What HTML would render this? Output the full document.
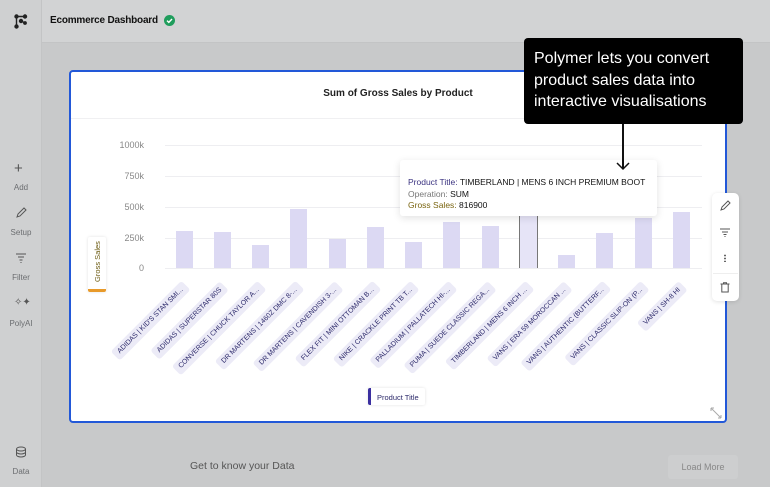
<!DOCTYPE html>
<html><head><meta charset="utf-8"><style>
*{margin:0;padding:0;box-sizing:border-box}
body{width:770px;height:487px;overflow:hidden;background:#c8c9ca;font-family:"Liberation Sans",sans-serif;position:relative}
.abs{position:absolute}
.side{left:0;top:0;width:42px;height:487px;background:#cfd0d1;border-right:1px solid #c3c4c5}
.top{left:42px;top:0;width:728px;height:43px;background:#d2d3d4;border-bottom:1px solid #c3c4c5}
.slabel{width:42px;text-align:center;font-size:8px;color:#6b6d70}
.card{left:69px;top:70px;width:658px;height:353px;background:#fff;border:2px solid #2258d8;border-radius:4px}
.yl{width:60px;text-align:right;font-size:9px;color:#888;left:84px}
.grid{left:165px;width:537px;height:1px;background:#eeeef1}
.bar{width:17px;background:#dcd9f3;bottom:219px}
.lab{font-size:7px;color:#2d2a6b;background:#ecebf7;padding:3px 5px;border-radius:3px;white-space:nowrap;transform-origin:100% 50%;transform:rotate(-45deg)}
.tb{left:712px;top:193px;width:27px;height:108px;background:#fff;border-radius:5px;box-shadow:0 1px 4px rgba(0,0,0,.12)}
</style></head><body>
<div class="abs side"></div>
<div class="abs top"></div>
<svg class="abs" style="left:14px;top:14px" width="14" height="15" viewBox="0 0 14 15"><g fill="#222" stroke="#222" stroke-width="1.4"><circle cx="2.5" cy="2.5" r="1.5"/><circle cx="11" cy="2.5" r="1.5"/><circle cx="7" cy="7" r="1.5"/><circle cx="11" cy="9" r="1.2"/><circle cx="2.5" cy="12.5" r="1.5"/><path d="M2.5 2.5H11M2.5 2.5V12.5M7 7L11 9" fill="none"/></g></svg>
<div class="abs" style="left:50px;top:15px;font-size:10px;color:#111;font-weight:bold;letter-spacing:-.2px">Ecommerce Dashboard</div>
<svg class="abs" style="left:164px;top:15px" width="11" height="11"><circle cx="5.5" cy="5.5" r="5.5" fill="#1f9d5c"/><path d="M3 5.6l1.8 1.8L8 4" stroke="#fff" stroke-width="1.4" fill="none"/></svg>
<div class="abs" style="left:14px;top:160px;font-size:15px;color:#555">+</div>
<div class="abs slabel" style="top:183px">Add</div>
<svg class="abs" style="left:15px;top:207px" width="12" height="12"><path d="M2 10l1-3 6-6 2 2-6 6z" fill="none" stroke="#555" stroke-width="1"/></svg>
<div class="abs slabel" style="top:228px">Setup</div>
<svg class="abs" style="left:15px;top:253px" width="12" height="10"><path d="M1 1h10M3 4h6M4.5 7h3M5.5 9.5h1" stroke="#555" stroke-width="1"/></svg>
<div class="abs slabel" style="top:273px">Filter</div>
<div class="abs" style="left:14px;top:297px;font-size:10px;color:#555">✧✦</div>
<div class="abs slabel" style="top:319px">PolyAI</div>
<svg class="abs" style="left:15px;top:446px" width="12" height="12"><ellipse cx="6" cy="3" rx="4.5" ry="2" fill="none" stroke="#555"/><path d="M1.5 3v6c0 1 2 2 4.5 2s4.5-1 4.5-2V3M1.5 6c0 1 2 2 4.5 2s4.5-1 4.5-2" fill="none" stroke="#555"/></svg>
<div class="abs slabel" style="top:467px">Data</div>

<div class="abs card"></div>
<div class="abs" style="left:71px;top:88px;width:654px;text-align:center;font-size:10px;font-weight:bold;color:#222">Sum of Gross Sales by Product</div>
<div class="abs" style="left:71px;top:118px;width:654px;height:1px;background:#f0f0f2"></div>
<div class="abs yl" style="top:140px">1000k</div>
<div class="abs yl" style="top:171px">750k</div>
<div class="abs yl" style="top:202px">500k</div>
<div class="abs yl" style="top:233px">250k</div>
<div class="abs yl" style="top:263px">0</div>
<div class="abs grid" style="top:145px"></div>
<div class="abs grid" style="top:176px"></div>
<div class="abs grid" style="top:207px"></div>
<div class="abs grid" style="top:238px"></div>
<div class="abs grid" style="top:268px"></div>
<div class="abs bar" style="left:176px;height:37px"></div>
<div class="abs bar" style="left:214px;height:36px"></div>
<div class="abs bar" style="left:252px;height:23px"></div>
<div class="abs bar" style="left:290px;height:59px"></div>
<div class="abs bar" style="left:329px;height:29px"></div>
<div class="abs bar" style="left:367px;height:41px"></div>
<div class="abs bar" style="left:405px;height:26px"></div>
<div class="abs bar" style="left:443px;height:46px"></div>
<div class="abs bar" style="left:482px;height:42px"></div>
<div class="abs bar" style="left:519px;height:100px;border-left:1.5px solid #777;border-right:1.5px solid #777;width:19px;background:#e6e4f7"></div>
<div class="abs" style="left:519px;top:167px;width:19px;height:4px;border:1.5px solid #777;border-bottom:none;border-radius:3px 3px 0 0"></div>
<div class="abs bar" style="left:558px;height:13px"></div>
<div class="abs bar" style="left:596px;height:35px"></div>
<div class="abs bar" style="left:635px;height:50px"></div>
<div class="abs bar" style="left:673px;height:56px"></div>

<div class="abs" style="right:584px;top:279px;"><div class="lab">ADIDAS | KID'S STAN SMI...</div></div>
<div class="abs" style="right:546px;top:279px;"><div class="lab">ADIDAS | SUPERSTAR 80S</div></div>
<div class="abs" style="right:508px;top:279px;"><div class="lab">CONVERSE | CHUCK TAYLOR A...</div></div>
<div class="abs" style="right:470px;top:279px;"><div class="lab">DR MARTENS | 1460Z DMC 8-...</div></div>
<div class="abs" style="right:431px;top:279px;"><div class="lab">DR MARTENS | CAVENDISH 3-...</div></div>
<div class="abs" style="right:393px;top:279px;"><div class="lab">FLEX FIT | MINI OTTOMAN B...</div></div>
<div class="abs" style="right:355px;top:279px;"><div class="lab">NIKE | CRACKLE PRINT TB T...</div></div>
<div class="abs" style="right:317px;top:279px;"><div class="lab">PALLADIUM | PALLATECH HI-...</div></div>
<div class="abs" style="right:278px;top:279px;"><div class="lab">PUMA | SUEDE CLASSIC REGA...</div></div>
<div class="abs" style="right:240px;top:279px;"><div class="lab">TIMBERLAND | MENS 6 INCH ...</div></div>
<div class="abs" style="right:202px;top:279px;"><div class="lab">VANS | ERA 59 MOROCCAN ...</div></div>
<div class="abs" style="right:163px;top:279px;"><div class="lab">VANS | AUTHENTIC (BUTTERF...</div></div>
<div class="abs" style="right:125px;top:279px;"><div class="lab">VANS | CLASSIC SLIP-ON (P...</div></div>
<div class="abs" style="right:87px;top:279px;"><div class="lab">VANS | SH-8 HI</div></div>

<div class="abs" style="left:88px;top:237px;width:18px;height:55px;background:#fff;box-shadow:0 0 3px rgba(0,0,0,.12);border-bottom:3px solid #e89a2a;border-radius:2px"></div>
<div class="abs" style="left:70px;top:257px;width:55px;font-size:7.5px;color:#6b5a10;transform:rotate(-90deg);text-align:center">Gross Sales</div>
<div class="abs" style="left:368px;top:388px;width:57px;height:17px;background:#fff;box-shadow:0 0 3px rgba(0,0,0,.12);border-left:3px solid #3b2fa0;border-radius:2px;font-size:7.5px;color:#2d2a6b;padding:5px 0 0 6px">Product Title</div>

<div class="abs" style="left:400px;top:160px;width:257px;height:56px;background:#fff;border-radius:3px;box-shadow:0 2px 8px rgba(0,0,0,.12);font-size:8.5px;line-height:11.5px;padding:17px 0 0 8px;color:#111">
<div><span style="color:#3b3380">Product Title:</span> TIMBERLAND | MENS 6 INCH PREMIUM BOOT</div>
<div><span style="color:#777">Operation:</span> SUM</div>
<div><span style="color:#7a6510">Gross Sales:</span> 816900</div></div>

<div class="abs tb"></div>
<svg class="abs" style="left:719px;top:200px" width="12" height="12"><path d="M2 10l1-3 6-6 2 2-6 6z" fill="none" stroke="#555" stroke-width="1"/></svg>
<svg class="abs" style="left:720px;top:228px" width="10" height="9"><path d="M0 1h10M2 4h6M3.5 6.5h3M4.5 8.5h1" stroke="#555" stroke-width="1"/></svg>
<div class="abs" style="left:724px;top:254px;width:2px;height:8px;background:radial-gradient(circle,#666 0.8px,transparent 1px) 0 0/2px 3px"></div>
<div class="abs" style="left:713px;top:273px;width:25px;height:1px;background:#eee"></div>
<svg class="abs" style="left:720px;top:282px" width="10" height="11"><path d="M0.5 2h9M3.5 2V0.7h3V2M1.8 2v8h6.4V2" fill="none" stroke="#555" stroke-width="1"/></svg>
<svg class="abs" style="left:710px;top:407px" width="12" height="12"><path d="M1 1l10 10M1 1v3M1 1h3M11 11v-3M11 11h-3" fill="none" stroke="#aaa" stroke-width="1"/></svg>

<div class="abs" style="left:524px;top:38px;width:219px;height:86px;background:#000;border-radius:4px;color:#fff;font-size:16px;line-height:21.7px;padding:10px 0 0 10px">Polymer lets you convert product sales data into interactive visualisations</div>
<div class="abs" style="left:622px;top:124px;width:1.5px;height:44px;background:#111"></div>
<svg class="abs" style="left:616px;top:160px" width="14" height="11"><path d="M1 3l6 6 6-6" fill="none" stroke="#111" stroke-width="1.5"/></svg>

<div class="abs" style="left:190px;top:460px;font-size:10.5px;color:#555">Get to know your Data</div>
<div class="abs" style="left:668px;top:455px;width:70px;height:24px;background:#cdcecf;border-radius:3px;font-size:9px;color:#888;text-align:center;line-height:24px">Load More</div>
</body></html>
